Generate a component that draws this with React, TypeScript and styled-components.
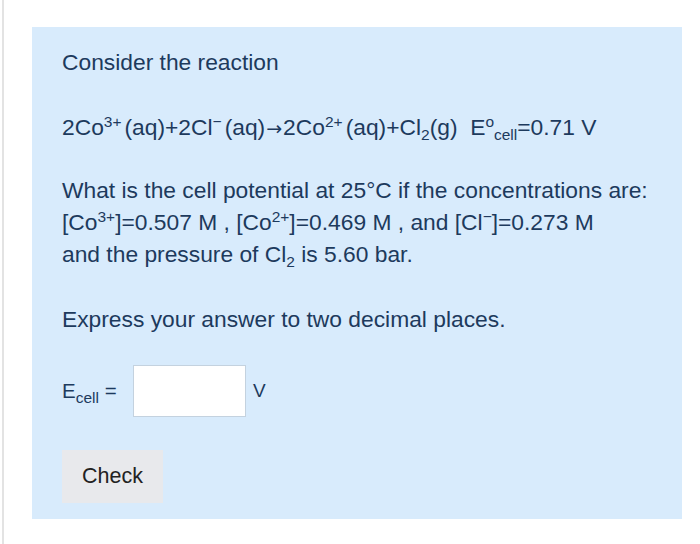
import React from "react";
import styled, { createGlobalStyle } from "styled-components";

const GlobalStyle = createGlobalStyle`
  html, body {
    margin: 0;
    padding: 0;
    background: #ffffff;
  }
  body {
    font-family: "Liberation Sans", Arial, sans-serif;
  }
`;

const Page = styled.div`
  width: 700px;
  height: 544px;
  box-sizing: border-box;
  border-left: 2px solid #e3e3e3;
  margin-left: 2px;
  padding: 27px 18px 0 28px;
`;

const Panel = styled.div`
  width: 650px;
  height: 492px;
  box-sizing: border-box;
  background: #d8ebfc;
  padding: 19px 20px 0 30px;
  color: #1d3a5d;
  font-size: 22.8px;
`;

const Para = styled.p<{ $gap?: number }>`
  margin: 0 0 ${(p) => p.$gap ?? 0}px 0;
  line-height: 32px;
  white-space: nowrap;
`;

const Sup = styled.sup<{ $space?: number }>`
  font-size: 15.5px;
  line-height: 0;
  vertical-align: 8px;
  margin-right: ${(p) => p.$space ?? 0}px;
`;

const Sub = styled.sub`
  font-size: 15.5px;
  line-height: 0;
  vertical-align: -5px;
`;

const Arrow = styled.span`
  font-family: "DejaVu Sans", sans-serif;
  font-size: 19px;
  margin: 0 1px;
`;

const AnswerRow = styled.div`
  display: flex;
  align-items: center;
  margin-bottom: 33px;
`;

const Label = styled.span`
  font-size: 20.5px;
  width: 71px;
  white-space: nowrap;
`;

const LabelSub = styled.sub`
  font-size: 15.5px;
  line-height: 0;
  vertical-align: -5px;
`;

const AnswerInput = styled.input`
  width: 113px;
  height: 52px;
  box-sizing: border-box;
  border: 1px solid #c4d2df;
  background: #ffffff;
  margin: 0;
  padding: 0 6px;
  font: inherit;
`;

const Unit = styled.span`
  font-size: 19px;
  margin-left: 7px;
`;

const CheckButton = styled.button`
  width: 101px;
  height: 53px;
  border: none;
  background: #e8e9ec;
  color: #222;
  font-family: "Liberation Sans", Arial, sans-serif;
  font-size: 21.5px;
  padding: 0;
`;

export default function App() {
  return (
    <>
      <GlobalStyle />
      <Page>
        <Panel>
          <Para $gap={33}>Consider the reaction</Para>
          <Para $gap={30}>
            2Co<Sup $space={3}>3+</Sup>(aq)+2Cl<Sup $space={3}>−</Sup>(aq)
            <Arrow>→</Arrow>2Co<Sup $space={3}>2+</Sup>(aq)+Cl<Sub>2</Sub>
            (g)&nbsp;&nbsp;E<Sup>o</Sup>
            <Sub>cell</Sub>=0.71 V
          </Para>
          <Para $gap={33}>
            What is the cell potential at 25°C if the concentrations are:
            <br />
            [Co<Sup>3+</Sup>]=0.507 M , [Co<Sup>2+</Sup>]=0.469 M , and [Cl
            <Sup>−</Sup>]=0.273 M
            <br />
            and the pressure of Cl<Sub>2</Sub> is 5.60 bar.
          </Para>
          <Para $gap={30}>Express your answer to two decimal places.</Para>
          <AnswerRow>
            <Label>
              E<LabelSub>cell</LabelSub> =
            </Label>
            <AnswerInput type="text" />
            <Unit>V</Unit>
          </AnswerRow>
          <CheckButton>Check</CheckButton>
        </Panel>
      </Page>
    </>
  );
}
